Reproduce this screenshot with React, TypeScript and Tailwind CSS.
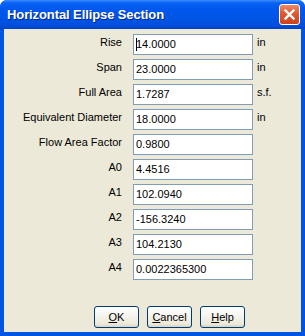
import { ReactNode } from "react";

const rows = [
  { label: "Rise", value: "14.0000", unit: "in", caret: true },
  { label: "Span", value: "23.0000", unit: "in" },
  { label: "Full Area", value: "1.7287", unit: "s.f." },
  { label: "Equivalent Diameter", value: "18.0000", unit: "in" },
  { label: "Flow Area Factor", value: "0.9800", unit: "" },
  { label: "A0", value: "4.4516", unit: "" },
  { label: "A1", value: "102.0940", unit: "" },
  { label: "A2", value: "-156.3240", unit: "" },
  { label: "A3", value: "104.2130", unit: "" },
  { label: "A4", value: "0.0022365300", unit: "" },
];

function XpButton({ children }: { children: ReactNode }) {
  return (
    <div className="flex h-[22px] w-[45px] items-center justify-center rounded-[3px] border border-[#003c74] bg-[linear-gradient(to_bottom,#ffffff_0%,#f6f5f0_40%,#ece9d8_85%,#d8d2c2_100%)] text-[11px] leading-none text-black">
      {children}
    </div>
  );
}

export default function App() {
  return (
    <div className="flex h-[336px] w-[305px] flex-col overflow-hidden rounded-t-[7px] bg-[#0054e3] font-['Liberation_Sans',Arial,sans-serif]">
      {/* title bar */}
      <div className="flex h-[29px] shrink-0 items-center justify-between bg-[linear-gradient(to_bottom,#3b8cff_0%,#0a62f4_10%,#0058ee_30%,#0055e5_60%,#004fdc_88%,#0043c9_100%)] pl-[7px] pr-[5px]">
        <span className="pt-[1px] text-[13px] font-bold tracking-[-0.1px] text-white [text-shadow:1px_1px_0_#0a2a8c]">
          Horizontal Ellipse Section
        </span>
        <div className="flex h-[21px] w-[21px] items-center justify-center rounded-[3px] border border-white bg-[linear-gradient(to_bottom,#eb8a66_0%,#e2582f_45%,#cc4319_100%)]">
          <svg width="13" height="13" viewBox="0 0 13 13">
            <path d="M2.5 2.5 L10.5 10.5 M10.5 2.5 L2.5 10.5" stroke="#fff" strokeWidth="2.4" strokeLinecap="square" />
          </svg>
        </div>
      </div>

      {/* client area */}
      <div className="mx-[4px] mb-[4px] flex flex-1 flex-col bg-[#ece9d8] pt-[5px]">
        <div className="flex flex-col gap-[4px]">
          {rows.map((row) => (
            <div key={row.label} className="flex h-[21px] items-start">
              <div className="w-[118px] pt-[2px] text-right text-[11px] leading-[13px] text-black">
                {row.label}
              </div>
              <div className="ml-[11px] flex h-[21px] w-[120px] items-center border border-[#7f9db9] bg-white pl-[2px] text-[11px] leading-[17px] text-black">
                {row.caret && <span className="-mr-[1px] inline-block h-[13px] w-px bg-black" />}
                {row.value}
              </div>
              <div className="ml-[4px] pt-[2px] text-[11px] leading-[13px] text-black">{row.unit}</div>
            </div>
          ))}
        </div>

        <div className="mt-[26px] flex gap-[8px] pl-[90px]">
          <XpButton>
            <span className="underline underline-offset-[1px]">O</span>K
          </XpButton>
          <XpButton>
            <span className="underline underline-offset-[1px]">C</span>ancel
          </XpButton>
          <XpButton>
            <span className="underline underline-offset-[1px]">H</span>elp
          </XpButton>
        </div>
      </div>
    </div>
  );
}
